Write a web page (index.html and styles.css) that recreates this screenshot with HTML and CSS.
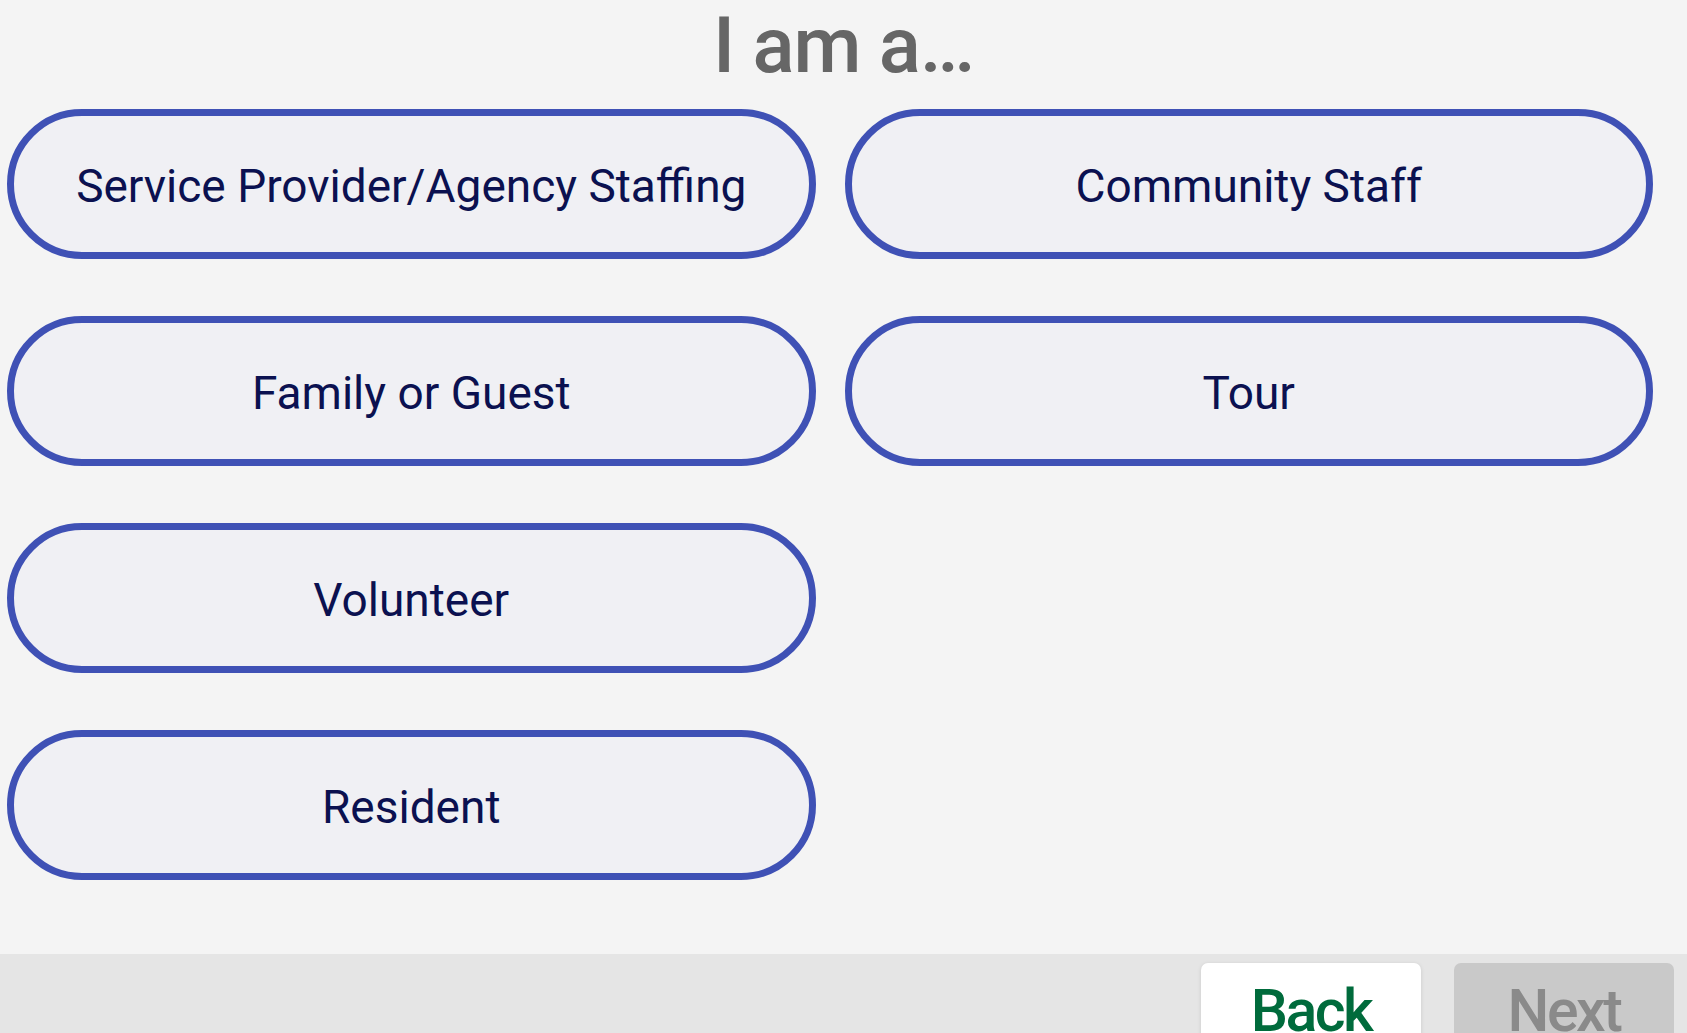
FILE: index.html
```html
<!DOCTYPE html>
<html lang="en">
<head>
<meta charset="utf-8">
<title>I am a…</title>
<link rel="stylesheet" href="styles.css">
</head>
<body>
<div class="page">
  <h1 class="title">I am a…</h1>
  <div class="choices">
    <button class="choice">Service Provider/Agency Staffing</button>
    <button class="choice">Community Staff</button>
    <button class="choice">Family or Guest</button>
    <button class="choice">Tour</button>
    <button class="choice">Volunteer</button>
    <div class="empty"></div>
    <button class="choice">Resident</button>
  </div>
  <div class="spacer"></div>
  <div class="footer">
    <button class="nav back">Back</button>
    <button class="nav next" disabled>Next</button>
  </div>
</div>
</body>
</html>
```
FILE: styles.css
```css
html, body {
  margin: 0;
  padding: 0;
  background: #f4f4f4;
  font-family: Roboto, "Liberation Sans", sans-serif;
}
.page {
  height: 1033px;
  display: flex;
  flex-direction: column;
  overflow: hidden;
}
.title {
  margin: 0;
  padding-top: 7px;
  font-size: 78px;
  line-height: 78px;
  font-weight: 500;
  letter-spacing: -1px;
  color: #666666;
  text-align: center;
}
.choices {
  margin-top: 24px;
  padding: 0 34px 0 7px;
  display: grid;
  grid-template-columns: 1fr 1fr;
  grid-auto-rows: 150px;
  column-gap: 29px;
  row-gap: 57px;
}
.choice {
  box-sizing: border-box;
  border: 7px solid #3f51b5;
  border-radius: 75px;
  background: #f0f0f4;
  color: #0b1150;
  font-family: Roboto, "Liberation Sans", sans-serif;
  font-size: 46px;
  line-height: 46px;
  font-weight: 400;
  padding: 4px 0 0 0;
  display: flex;
  align-items: center;
  justify-content: center;
}
.spacer {
  flex: 1;
}
.footer {
  height: 79px;
  flex: none;
  background: #e5e5e5;
  display: flex;
  justify-content: flex-end;
  align-items: flex-start;
  gap: 33px;
  padding: 9px 13px 0 0;
  box-sizing: border-box;
}
.nav {
  box-sizing: border-box;
  width: 220px;
  height: 90px;
  border: none;
  border-radius: 7px;
  font-family: Roboto, "Liberation Sans", sans-serif;
  font-size: 59px;
  line-height: 59px;
  font-weight: 500;
  letter-spacing: -2.5px;
  padding: 18px 0 0 0;
  display: flex;
  justify-content: center;
  align-items: flex-start;
}
.back {
  background: #ffffff;
  color: #006b3c;
  box-shadow: 0 1px 4px rgba(0, 0, 0, 0.12);
}
.next {
  background: #c9c9c9;
  color: #8a8a8a;
}
```
